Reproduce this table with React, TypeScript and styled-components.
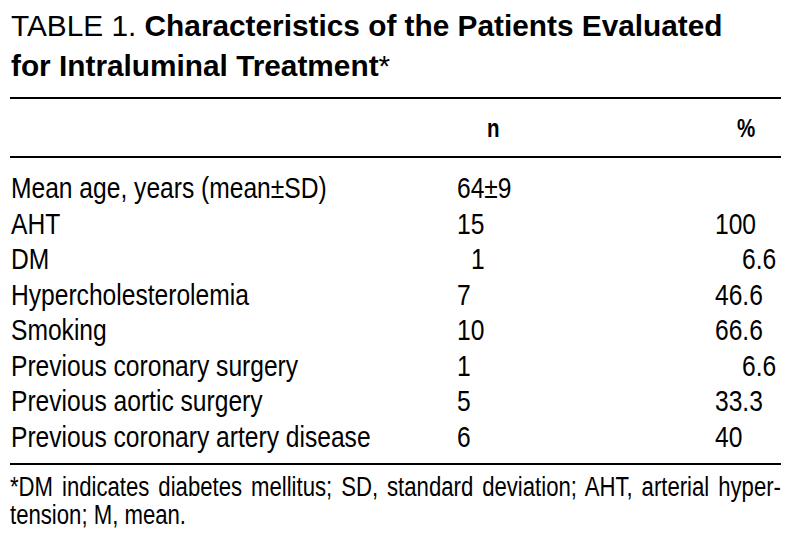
import React from 'react';
import styled, { createGlobalStyle } from 'styled-components';

// No condensed face is installed, so Liberation Sans is squeezed to Arial Narrow proportions.
const NARROW = 0.82;

const GlobalStyle = createGlobalStyle`
  html, body {
    margin: 0;
    padding: 0;
    background: #ffffff;
  }
`;

const Page = styled.div`
  width: 771px;
  padding: 6px 23px 0 10px;
  color: #000;
  font-family: 'Liberation Sans', Arial, sans-serif;
`;

const Caption = styled.div`
  font-size: 29.8px;
  line-height: 40px;
  padding-left: 1px;

  .label {
    font-weight: 400;
  }

  .title {
    font-weight: 700;
  }
`;

const Rule = styled.div<{ $gap: number }>`
  height: 2px;
  background: #000;
  margin-top: ${(p) => p.$gap}px;
`;

const Grid = styled.div`
  display: grid;
  grid-template-columns: 447px 258px 1fr;
`;

const HeadRow = styled(Grid)`
  height: 55px;
  align-items: center;
  font-size: 25px;
  font-weight: 700;
  padding-top: 2px;
`;

const Body = styled(Grid)`
  padding-top: 12px;
  font-size: 30px;
  line-height: 35.5px;
`;

const Cell = styled.div<{ $indent?: number }>`
  padding-left: ${(p) => p.$indent ?? 0}px;
  white-space: nowrap;
`;

const Narrow = styled.span`
  display: inline-block;
  transform: scaleX(${NARROW});
  transform-origin: 0 50%;
  white-space: nowrap;
`;

const Footnote = styled.div`
  margin-top: 8px;
  width: ${771 / NARROW}px;
  transform: scaleX(${NARROW});
  transform-origin: 0 0;
  font-size: 27px;
  line-height: 28px;
`;

const JustifiedLine = styled.div`
  text-align: justify;
  text-align-last: justify;
`;

type Row = { label: string; n: string; pct: string; nIndent?: number; pctIndent?: number };

const rows: Row[] = [
  { label: 'Mean age, years (mean±SD)', n: '64±9', pct: '' },
  { label: 'AHT', n: '15', pct: '100' },
  { label: 'DM', n: '1', pct: '6.6', nIndent: 14, pctIndent: 27 },
  { label: 'Hypercholesterolemia', n: '7', pct: '46.6' },
  { label: 'Smoking', n: '10', pct: '66.6' },
  { label: 'Previous coronary surgery', n: '1', pct: '6.6', pctIndent: 27 },
  { label: 'Previous aortic surgery', n: '5', pct: '33.3' },
  { label: 'Previous coronary artery disease', n: '6', pct: '40' },
];

const App: React.FC = () => {
  return (
    <Page>
      <GlobalStyle />
      <Caption>
        <span className="label">TABLE 1. </span>
        <span className="title">
          Characteristics of the Patients Evaluated
          <br />
          for Intraluminal Treatment
        </span>
        <span className="label">*</span>
      </Caption>

      <Rule $gap={11} />
      <HeadRow>
        <Cell />
        <Cell $indent={30}>
          <Narrow>n</Narrow>
        </Cell>
        <Cell $indent={22}>
          <Narrow>%</Narrow>
        </Cell>
      </HeadRow>
      <Rule $gap={0} />

      <Body>
        {rows.map((row, index) => (
          <React.Fragment key={index}>
            <Cell $indent={1}>
              <Narrow>{row.label}</Narrow>
            </Cell>
            <Cell $indent={row.nIndent}>
              <Narrow>{row.n}</Narrow>
            </Cell>
            <Cell $indent={row.pctIndent}>
              <Narrow>{row.pct}</Narrow>
            </Cell>
          </React.Fragment>
        ))}
      </Body>
      <Rule $gap={9} />

      <Footnote>
        <JustifiedLine>
          *DM indicates diabetes mellitus; SD, standard deviation; AHT, arterial hyper-
        </JustifiedLine>
        <div>tension; M, mean.</div>
      </Footnote>
    </Page>
  );
};

export default App;
